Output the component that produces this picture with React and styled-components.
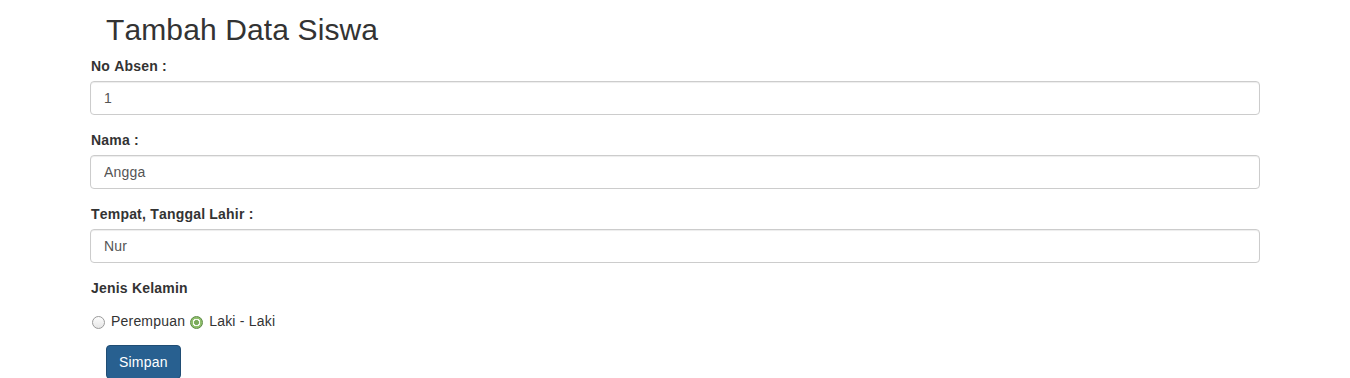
import React from "react";
import styled, { createGlobalStyle } from "styled-components";

const Global = createGlobalStyle`
  html, body { margin: 0; padding: 0; background: #fff; }
  body {
    font-family: "Liberation Sans", Arial, sans-serif;
    font-size: 14px;
    line-height: 1.42857143;
    color: #333;
    font-kerning: none;
    letter-spacing: 0.2px;
  }
  * { box-sizing: border-box; }
`;

const Container = styled.div`
  width: 1170px;
  margin: 0 auto;
`;

const Title = styled.h2`
  margin: 13px 0 10px;
  padding-left: 16px;
  font-size: 30px;
  font-weight: 500;
  line-height: 1.1;
  letter-spacing: 0.12px;
  color: #333;
`;

const Group = styled.div`
  margin-bottom: 15px;
`;

const Label = styled.label`
  display: block;
  max-width: 100%;
  margin-bottom: 5px;
  font-weight: bold;
  padding-left: 1px;
`;

const Input = styled.input`
  display: block;
  width: 100%;
  height: 34px;
  padding: 6px 13px;
  font-family: inherit;
  font-size: 14px;
  font-kerning: none;
  letter-spacing: 0.2px;
  line-height: 1.42857143;
  color: #555;
  background: #fff;
  border: 1px solid #ccc;
  border-radius: 4px;
  box-shadow: inset 0 1px 1px rgba(0, 0, 0, 0.075);
  outline: none;
`;

const RadioRow = styled.div`
  display: flex;
  align-items: center;
  height: 20px;
  margin: 13px 0 14px 0;
`;

const Radio = styled.input.attrs({ type: "radio" })`
  appearance: none;
  -webkit-appearance: none;
  width: 13px;
  height: 13px;
  margin: 3px 6px 0 2px;
  border-radius: 50%;
  border: 1px solid ${(p) => (p.checked ? "#5d8a45" : "#9a9a9a")};
  background: ${(p) =>
    p.checked
      ? "radial-gradient(circle, #7aa95b 0 2.2px, #f4f8ef 2.6px 3.6px, #8fbf6c 4px)"
      : "linear-gradient(#fdfdfd, #e6e6e6)"};
  flex: none;
`;

const RadioText = styled.span`
  margin-right: 3px;
`;

const Button = styled.button`
  margin-left: 16px;
  padding: 6px 12px;
  font-family: inherit;
  font-size: 14px;
  font-kerning: none;
  letter-spacing: 0.2px;
  line-height: 1.42857143;
  color: #fff;
  background: #286090;
  border: 1px solid #204d74;
  border-radius: 4px;
`;

export default function App() {
  return (
    <>
      <Global />
      <Container>
        <Title>Tambah Data Siswa</Title>
        <Group>
          <Label>No Absen :</Label>
          <Input defaultValue="1" />
        </Group>
        <Group>
          <Label>Nama :</Label>
          <Input defaultValue="Angga" />
        </Group>
        <Group>
          <Label>Tempat, Tanggal Lahir :</Label>
          <Input defaultValue="Nur" />
        </Group>
        <Label>Jenis Kelamin</Label>
        <RadioRow>
          <Radio name="jk" readOnly checked={false} />
          <RadioText>Perempuan</RadioText>
          <Radio name="jk" readOnly checked />
          <RadioText>Laki - Laki</RadioText>
        </RadioRow>
        <Button>Simpan</Button>
      </Container>
    </>
  );
}
